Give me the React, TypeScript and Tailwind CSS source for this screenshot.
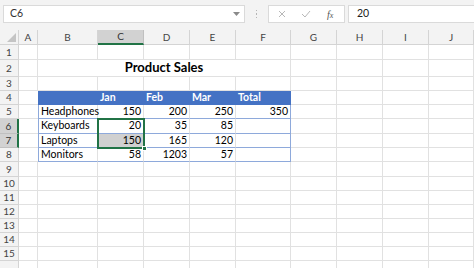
import React from "react";

const colW = [19, 19, 60, 46, 46, 46, 55, 46, 46, 46, 45];
const rowH = [15, 17, 14, 14, 14, 15, 14, 14, 15, 14, 14, 14, 14, 14, 14, 8];
const letters = ["A", "B", "C", "D", "E", "F", "G", "H", "I", "J"];

type Cell = { t: string; align?: "l" | "r" | "c"; bold?: boolean };

const data: Record<number, (Cell | null)[]> = {
  4: [null, { t: "" }, { t: "Jan" }, { t: "Feb" }, { t: "Mar" }, { t: "Total" }],
  5: [null, { t: "Headphones" }, { t: "150", align: "r" }, { t: "200", align: "r" }, { t: "250", align: "r" }, { t: "350", align: "r" }],
  6: [null, { t: "Keyboards" }, { t: "20", align: "r" }, { t: "35", align: "r" }, { t: "85", align: "r" }, { t: "" }],
  7: [null, { t: "Laptops" }, { t: "150", align: "r" }, { t: "165", align: "r" }, { t: "120", align: "r" }, { t: "" }],
  8: [null, { t: "Monitors" }, { t: "58", align: "r" }, { t: "1203", align: "r" }, { t: "57", align: "r" }, { t: "" }],
};

export default function App() {
  const rows = rowH.map((h, i) => i + 1);
  return (
    <div
      className="w-[474px] h-[268px] overflow-hidden bg-white relative text-black"
      style={{ fontFamily: "Lato, 'Open Sans', sans-serif" }}
    >
      {/* Top formula bar */}
      <div className="h-[30px] bg-[#f3f3f3] flex items-start pt-[5px]">
        <div className="ml-[3px] w-[242px] h-[18px] bg-white border border-[#dadada] flex items-center justify-between pl-[6px] pr-[4px]">
          <span className="text-[10.5px] text-[#333]">C6</span>
          <svg width="7" height="4" viewBox="0 0 7 4">
            <path d="M0 0 L7 0 L3.5 4 Z" fill="#8a8a8a" />
          </svg>
        </div>
        <div className="w-[23px] h-[18px] flex flex-col items-center justify-center gap-[2px]">
          <div className="w-[1.5px] h-[1.5px] bg-[#b5b5b5]" />
          <div className="w-[1.5px] h-[1.5px] bg-[#b5b5b5]" />
          <div className="w-[1.5px] h-[1.5px] bg-[#b5b5b5]" />
        </div>
        <div className="w-[77px] h-[18px] bg-white border border-[#dadada] flex items-center">
          <svg width="8" height="8" viewBox="0 0 8 8" className="ml-[9px]">
            <path d="M1 1 L7 7 M7 1 L1 7" stroke="#b8b8b8" strokeWidth="1" />
          </svg>
          <svg width="10" height="8" viewBox="0 0 10 8" className="ml-[15px]">
            <path d="M1 4 L4 7 L9 1" stroke="#b8b8b8" strokeWidth="1" fill="none" />
          </svg>
          <span
            className="ml-[16px] text-[10px] italic text-[#555]"
            style={{ fontFamily: "'Liberation Serif', serif" }}
          >
            f<span className="text-[8px]">x</span>
          </span>
        </div>
        <div className="ml-[3px] flex-1 h-[18px] bg-white border border-[#dadada] border-r-0 flex items-center pl-[8px]">
          <span className="text-[10.5px] text-[#222]">20</span>
        </div>
      </div>

      {/* Sheet grid */}
      <div
        className="grid"
        style={{
          gridTemplateColumns: colW.map((w) => w + "px").join(" "),
          gridTemplateRows: ["15px", ...rowH.map((h) => h + "px")].join(" "),
        }}
      >
        {/* header row */}
        <div className="bg-[#f3f3f3] border-r border-b border-[#d4d4d4] relative">
          <svg width="9" height="9" viewBox="0 0 9 9" className="absolute right-[2px] bottom-[2px]">
            <path d="M9 0 L9 9 L0 9 Z" fill="#c4c4c4" />
          </svg>
        </div>
        {letters.map((l) => (
          <div
            key={l}
            className={
              l === "C"
                ? "bg-[#d2d2d2] border-r border-[#c0c0c0] border-b-2 border-b-[#217346] flex items-center justify-center text-[10px] text-[#333]"
                : "bg-[#f3f3f3] border-r border-b border-[#d4d4d4] flex items-center justify-center text-[10px] text-[#444]"
            }
          >
            {l}
          </div>
        ))}

        {rows.map((r) => {
          const sel = r === 6 || r === 7;
          const rowCells: React.ReactNode[] = [];
          rowCells.push(
            <div
              key={"h" + r}
              className={
                sel
                  ? "bg-[#d2d2d2] border-b border-[#c0c0c0] border-r-2 border-r-[#217346] flex items-center justify-center text-[10px] text-[#333]"
                  : "bg-[#f3f3f3] border-r border-b border-[#d4d4d4] flex items-center justify-center text-[10px] text-[#444]"
              }
            >
              {r <= 15 ? r : ""}
            </div>
          );
          if (r === 2) {
            rowCells.push(<div key="a" className="border-r border-b border-[#e1e1e1]" />);
            rowCells.push(
              <div
                key="merged"
                className="col-span-5 border-r border-b border-[#e1e1e1] flex items-center justify-center text-[13px] font-bold"
              >
                Product Sales
              </div>
            );
            for (let c = 6; c < 10; c++) {
              rowCells.push(<div key={"c" + c} className="border-r border-b border-[#e1e1e1]" />);
            }
            return rowCells;
          }
          for (let c = 0; c < 10; c++) {
            const inTable = r >= 4 && r <= 8 && c >= 1 && c <= 5;
            const d = data[r]?.[c];
            let cls = "border-r border-b border-[#e1e1e1] flex items-center text-[10.5px] whitespace-nowrap overflow-visible";
            if (inTable) {
              if (r === 4) {
                cls =
                  "bg-[#4472c4] text-white font-bold flex items-center text-[10.5px] whitespace-nowrap border-b border-[#4472c4]";
              } else {
                cls =
                  "border-b border-b-[#8ea9db] flex items-center text-[10.5px] whitespace-nowrap " +
                  (c === 5 ? "border-r border-r-[#8ea9db] " : "border-r border-r-[#e1e1e1] ") +
                  (c === 1 ? "border-l border-l-[#8ea9db] " : "");
              }
              if (c === 2 && r === 7) cls += " bg-[#d0d0d0]";
            } else if (c === 0 && r >= 4 && r <= 8) {
              cls = "border-b border-[#e1e1e1] flex items-center";
            }
            const align = d?.align === "r" ? "justify-end pr-[2px]" : "justify-start pl-[2px]";
            rowCells.push(
              <div key={"c" + c} className={cls + " " + align}>
                {d?.t ?? ""}
              </div>
            );
          }
          return rowCells;
        })}
      </div>

      {/* Selection outline C6:C7 */}
      <div className="absolute left-[97px] top-[118px] w-[48px] h-[31px] border-2 border-[#217346] pointer-events-none" />
      <div className="absolute left-[142px] top-[146px] w-[5px] h-[5px] bg-[#217346] border border-white pointer-events-none" />
    </div>
  );
}
